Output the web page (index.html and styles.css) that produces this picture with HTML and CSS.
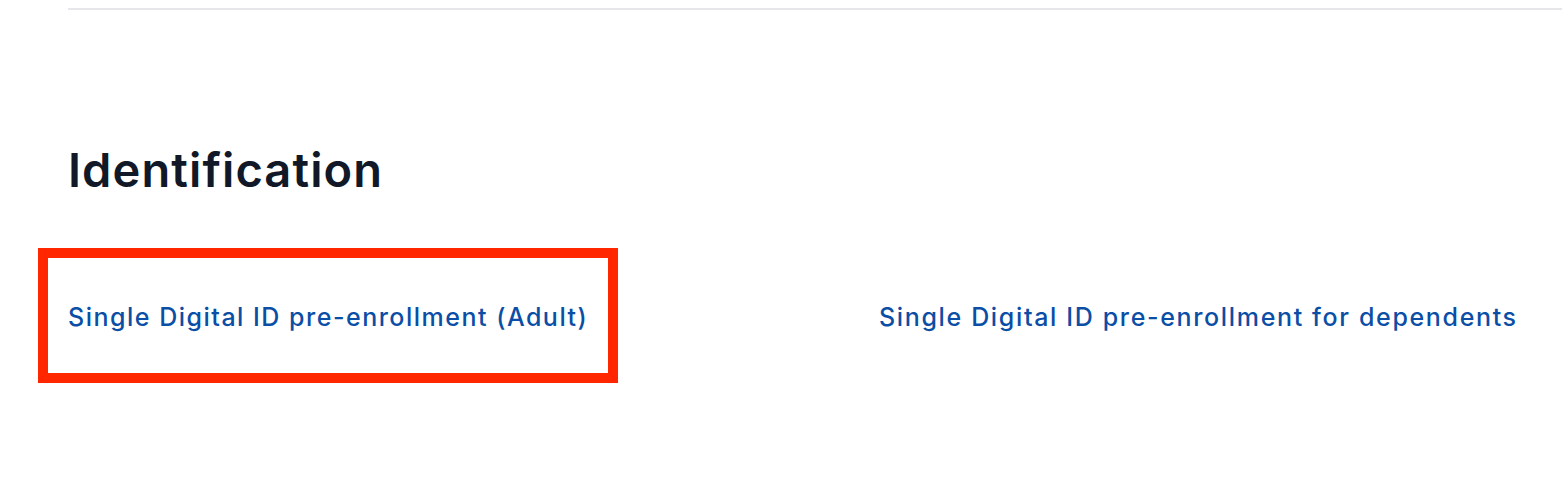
FILE: index.html
```html
<!DOCTYPE html>
<html lang="en">
<head>
<meta charset="utf-8">
<title>Identification</title>
<link rel="stylesheet" href="styles.css">
</head>
<body>
<main class="page">
  <hr class="divider">
  <section class="section">
    <h2 class="section-title">Identification</h2>
    <div class="link-grid">
      <a class="link-item highlighted" href="#">Single Digital ID pre-enrollment (Adult)</a>
      <a class="link-item wide" href="#">Single Digital ID pre-enrollment for dependents</a>
    </div>
  </section>
</main>
</body>
</html>
```
FILE: styles.css
```css
* { box-sizing: border-box; }
html, body { margin: 0; padding: 0; background: #ffffff; }
body {
  font-family: Inter, "Noto Sans", "Liberation Sans", sans-serif;
  width: 1562px;
  height: 492px;
  overflow: hidden;
}
.page {
  padding: 8px 0 0 68px;
}
.divider {
  margin: 0;
  border: 0;
  height: 2px;
  background: #e6e6eb;
}
.section {
  padding-top: 131px;
}
.section-title {
  margin: 0;
  font-size: 47px;
  line-height: 57px;
  font-weight: 600;
  color: #111827;
  letter-spacing: 1.1px;
}
.link-grid {
  margin-top: 60px;
  margin-left: -20px;
  display: grid;
  grid-template-columns: 811px 1fr;
  align-items: start;
}
.link-item {
  justify-self: start;
  display: flex;
  align-items: center;
  height: 115px;
  padding: 3px 20px 0 20px;
  font-size: 25px;
  line-height: 32px;
  font-weight: 500;
  color: #0b4ea6;
  text-decoration: none;
  letter-spacing: 1.5px;
}
.wide {
  letter-spacing: 1.65px;
}
.highlighted {
  outline: 10px solid #ff2600;
}
```
